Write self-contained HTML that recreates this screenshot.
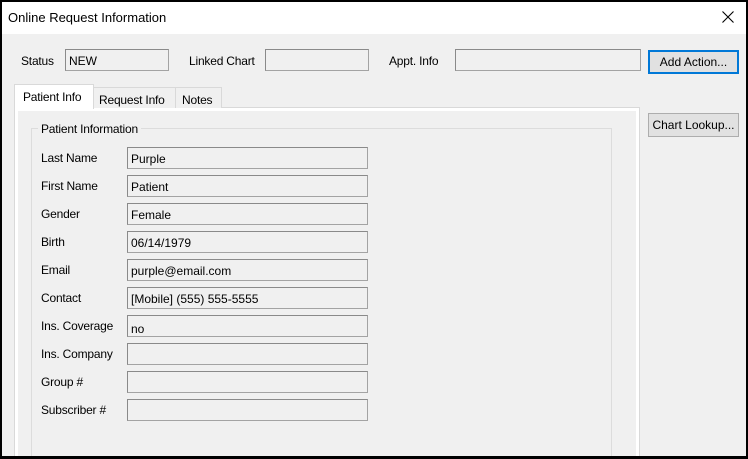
<!DOCTYPE html>
<html><head><style>
*{margin:0;padding:0;box-sizing:border-box}
body{width:748px;height:459px;background:#000;font-family:"Liberation Sans",sans-serif;font-size:12px;color:#000;overflow:hidden;position:relative}
.win{position:absolute;left:2px;top:2px;width:744px;height:454px;background:#f0f0f0;overflow:hidden}
.title{position:absolute;left:0;top:0;width:744px;height:32px;background:#fff}
.title span{position:absolute;left:6px;top:8px;font-size:13px}
.x{position:absolute;left:716px;top:5px;font-size:18px;font-weight:normal}
.a{position:absolute}
.lbl{position:absolute;font-size:12px;letter-spacing:-0.2px}
.f{position:absolute;height:22px;border:1px solid #a3a3a3;border-top-color:#8a8a8a;border-left-color:#8a8a8a;background:#f0f0f0;padding:4px 0 0 3px;font-size:12px}
.btn{position:absolute;height:24px;background:#e1e1e1;border:1px solid #adadad;text-align:center;padding-top:4px;font-size:12px}
</style></head><body>
<div class="win">
<div class="title"><span>Online Request Information</span><svg class="a" style="left:720px;top:9px" width="12" height="12" viewBox="0 0 12 12"><path d="M0.5 0.5L11.5 11.5M11.5 0.5L0.5 11.5" stroke="#000" stroke-width="1.1"/></svg></div>

<div class="lbl" style="left:19px;top:52px">Status</div>
<div class="f" style="left:63px;top:47px;width:104px;padding-left:3px">NEW</div>
<div class="lbl" style="left:187px;top:52px">Linked Chart</div>
<div class="f" style="left:263px;top:47px;width:104px"></div>
<div class="lbl" style="left:387px;top:52px">Appt. Info</div>
<div class="f" style="left:453px;top:47px;width:186px"></div>
<div class="btn" style="left:646px;top:48px;width:91px;border:2px solid #0078d7;padding-top:3px">Add Action...</div>
<div class="btn" style="left:646px;top:111px;width:91px">Chart Lookup...</div>

<!-- tab pane -->
<div class="a" style="left:12px;top:105px;width:626px;height:360px;border:1px solid #d9d9d9;background:#fff"></div>
<div class="a" style="left:16px;top:109px;width:618px;height:360px;background:#f0f0f0"></div>
<div class="a" style="left:12px;top:82px;width:80px;height:25px;background:#fff;border:1px solid #d9d9d9;border-bottom:none"></div>
<div class="lbl" style="left:21px;top:88px">Patient Info</div>
<div class="a" style="left:92px;top:85px;width:82px;height:21px;background:#f0f0f0;border:1px solid #d9d9d9;border-bottom:none;border-left:none"></div>
<div class="lbl" style="left:97px;top:91px">Request Info</div>
<div class="a" style="left:174px;top:85px;width:46px;height:21px;background:#f0f0f0;border:1px solid #d9d9d9;border-bottom:none;border-left:none"></div>
<div class="lbl" style="left:180px;top:91px">Notes</div>

<!-- group -->
<div class="a" style="left:29px;top:126px;width:581px;height:340px;border:1px solid #dcdcdc;border-bottom:none"></div>
<div class="lbl" style="left:36px;top:120px;background:#f0f0f0;padding:0 3px">Patient Information</div>

<div class="lbl" style="left:39px;top:149px">Last Name</div><div class="f" style="left:125px;top:145px;width:241px">Purple</div>
<div class="lbl" style="left:39px;top:177px">First Name</div><div class="f" style="left:125px;top:173px;width:241px">Patient</div>
<div class="lbl" style="left:39px;top:205px">Gender</div><div class="f" style="left:125px;top:201px;width:241px">Female</div>
<div class="lbl" style="left:39px;top:233px">Birth</div><div class="f" style="left:125px;top:229px;width:241px">06/14/1979</div>
<div class="lbl" style="left:39px;top:261px">Email</div><div class="f" style="left:125px;top:257px;width:241px">purple@email.com</div>
<div class="lbl" style="left:39px;top:289px">Contact</div><div class="f" style="left:125px;top:285px;width:241px">[Mobile] (555) 555-5555</div>
<div class="lbl" style="left:39px;top:317px">Ins. Coverage</div><div class="f" style="left:125px;top:313px;width:241px;padding-top:6px">no</div>
<div class="lbl" style="left:39px;top:345px">Ins. Company</div><div class="f" style="left:125px;top:341px;width:241px"></div>
<div class="lbl" style="left:39px;top:373px">Group #</div><div class="f" style="left:125px;top:369px;width:241px"></div>
<div class="lbl" style="left:39px;top:401px">Subscriber #</div><div class="f" style="left:125px;top:397px;width:241px"></div>
</div>
</body></html>
